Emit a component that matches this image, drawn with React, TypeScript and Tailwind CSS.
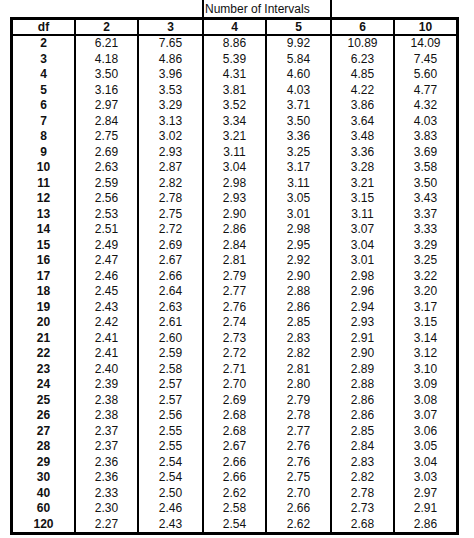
import React from 'react';

const headers = ['2', '3', '4', '5', '6', '10'];

const rows: [string, string[]][] = [
    ['2', ['6.21', '7.65', '8.86', '9.92', '10.89', '14.09']],
    ['3', ['4.18', '4.86', '5.39', '5.84', '6.23', '7.45']],
    ['4', ['3.50', '3.96', '4.31', '4.60', '4.85', '5.60']],
    ['5', ['3.16', '3.53', '3.81', '4.03', '4.22', '4.77']],
    ['6', ['2.97', '3.29', '3.52', '3.71', '3.86', '4.32']],
    ['7', ['2.84', '3.13', '3.34', '3.50', '3.64', '4.03']],
    ['8', ['2.75', '3.02', '3.21', '3.36', '3.48', '3.83']],
    ['9', ['2.69', '2.93', '3.11', '3.25', '3.36', '3.69']],
    ['10', ['2.63', '2.87', '3.04', '3.17', '3.28', '3.58']],
    ['11', ['2.59', '2.82', '2.98', '3.11', '3.21', '3.50']],
    ['12', ['2.56', '2.78', '2.93', '3.05', '3.15', '3.43']],
    ['13', ['2.53', '2.75', '2.90', '3.01', '3.11', '3.37']],
    ['14', ['2.51', '2.72', '2.86', '2.98', '3.07', '3.33']],
    ['15', ['2.49', '2.69', '2.84', '2.95', '3.04', '3.29']],
    ['16', ['2.47', '2.67', '2.81', '2.92', '3.01', '3.25']],
    ['17', ['2.46', '2.66', '2.79', '2.90', '2.98', '3.22']],
    ['18', ['2.45', '2.64', '2.77', '2.88', '2.96', '3.20']],
    ['19', ['2.43', '2.63', '2.76', '2.86', '2.94', '3.17']],
    ['20', ['2.42', '2.61', '2.74', '2.85', '2.93', '3.15']],
    ['21', ['2.41', '2.60', '2.73', '2.83', '2.91', '3.14']],
    ['22', ['2.41', '2.59', '2.72', '2.82', '2.90', '3.12']],
    ['23', ['2.40', '2.58', '2.71', '2.81', '2.89', '3.10']],
    ['24', ['2.39', '2.57', '2.70', '2.80', '2.88', '3.09']],
    ['25', ['2.38', '2.57', '2.69', '2.79', '2.86', '3.08']],
    ['26', ['2.38', '2.56', '2.68', '2.78', '2.86', '3.07']],
    ['27', ['2.37', '2.55', '2.68', '2.77', '2.85', '3.06']],
    ['28', ['2.37', '2.55', '2.67', '2.76', '2.84', '3.05']],
    ['29', ['2.36', '2.54', '2.66', '2.76', '2.83', '3.04']],
    ['30', ['2.36', '2.54', '2.66', '2.75', '2.82', '3.03']],
    ['40', ['2.33', '2.50', '2.62', '2.70', '2.78', '2.97']],
    ['60', ['2.30', '2.46', '2.58', '2.66', '2.73', '2.91']],
    ['120', ['2.27', '2.43', '2.54', '2.62', '2.68', '2.86']],
];

const gridCols = 'grid grid-cols-[61px_63px_65px_63px_65px_63px_63px]';

export default function App() {
    return (
        <div className="w-[474px] h-[538px] bg-white text-[#111] font-['Liberation_Sans',Arial,sans-serif]">
            {/* Caption box */}
            <div className="pl-[202px]">
                <div className="w-[130px] h-[17px] border-x-2 border-black pl-[1px] text-[12px] leading-[17px] pt-[1px]">
                    Number of Intervals
                </div>
            </div>

            {/* Table */}
            <div className="ml-[10px] w-[449px] border-[3px] border-black">
                <div className={`${gridCols} border-b-2 border-black font-bold text-[12px]`}>
                    <div className="h-[14px] leading-[14px] text-center">df</div>
                    {headers.map(h => (
                        <div key={h} className="h-[14px] leading-[14px] text-center border-l-2 border-black">
                            {h}
                        </div>
                    ))}
                </div>
                {rows.map(([df, vals]) => (
                    <div key={df} className={`${gridCols} text-[12px]`}>
                        <div className="h-[15.5px] leading-[15.5px] text-center font-bold">{df}</div>
                        {vals.map((v, i) => (
                            <div key={i} className="h-[15.5px] leading-[15.5px] text-center border-l-2 border-black">
                                {v}
                            </div>
                        ))}
                    </div>
                ))}
            </div>
        </div>
    );
}
